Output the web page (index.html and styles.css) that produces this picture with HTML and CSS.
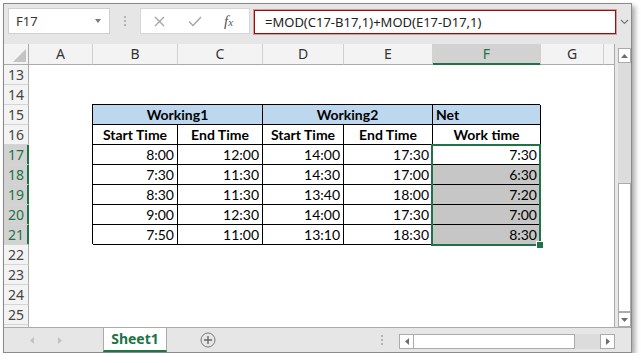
FILE: index.html
```html
<!DOCTYPE html>
<html lang="en">
<head>
    <meta charset="UTF-8">
    <meta name="viewport" content="width=device-width, initial-scale=1.0">
    <title>Sheet1 - Work time</title>
    <link rel="stylesheet" href="styles.css">
</head>
<body>

    <div class="window">

        <!-- Name box, edit buttons and formula input -->
        <div class="formula-bar">
            <div class="name-box">
                <span>F17</span>
                <span class="caret"></span>
            </div>
            <div class="grip">
                <svg width="3" height="11" viewBox="0 0 3 11"><rect x="0" y="0" width="2" height="2" fill="#b4b4b4"/><rect x="0" y="4" width="2" height="2" fill="#b4b4b4"/><rect x="0" y="8" width="2" height="2" fill="#b4b4b4"/></svg>
            </div>
            <div class="fx-box">
                <svg class="cancel" width="11" height="11" viewBox="0 0 11 11"><path d="M1 1 L10 10 M10 1 L1 10" stroke="#a6a6a6" stroke-width="1.4" fill="none"/></svg>
                <svg class="enter" width="14" height="11" viewBox="0 0 14 11"><path d="M1 5.5 L5 9.5 L13 1" stroke="#a6a6a6" stroke-width="1.4" fill="none"/></svg>
                <span class="fx"><i>f</i><i class="x">x</i></span>
            </div>
            <div class="formula">=MOD(C17-B17,1)+MOD(E17-D17,1)</div>
            <div class="expand">
                <svg width="9" height="6" viewBox="0 0 9 6"><path d="M1 1 L4.5 4.5 L8 1" stroke="#7a7a7a" stroke-width="1.2" fill="none"/></svg>
            </div>
        </div>

        <div class="main">
            <div class="sheet">
                <div class="col-heads">
                    <div class="corner">
                        <svg width="24" height="20" viewBox="0 0 24 20"><polygon points="9,18 22,18 22,5" fill="#c4c4c4"/></svg>
                    </div>
                    <div class="ch">A</div>
                    <div class="ch">B</div>
                    <div class="ch">C</div>
                    <div class="ch">D</div>
                    <div class="ch">E</div>
                    <div class="ch active">F</div>
                    <div class="ch">G</div>
                    <div class="ch fill"></div>
                </div>

                <div class="body">
                    <div class="row-heads">
                        <div class="rh">13</div>
                        <div class="rh">14</div>
                        <div class="rh">15</div>
                        <div class="rh">16</div>
                        <div class="rh active">17</div>
                        <div class="rh active">18</div>
                        <div class="rh active">19</div>
                        <div class="rh active">20</div>
                        <div class="rh active">21</div>
                        <div class="rh">22</div>
                        <div class="rh">23</div>
                        <div class="rh">24</div>
                        <div class="rh">25</div>
                        <div class="rh"></div>
                    </div>

                    <div class="cells">
                        <div class="tbl">
                            <div class="group span2">Working1</div>
                            <div class="group span2">Working2</div>
                            <div class="group net">Net</div>

                            <div class="head">Start Time</div>
                            <div class="head">End Time</div>
                            <div class="head">Start Time</div>
                            <div class="head">End Time</div>
                            <div class="head">Work time</div>

                            <div class="num">8:00</div>
                            <div class="num">12:00</div>
                            <div class="num">14:00</div>
                            <div class="num">17:30</div>
                            <div class="num">7:30</div>

                            <div class="num">7:30</div>
                            <div class="num">11:30</div>
                            <div class="num">14:30</div>
                            <div class="num">17:00</div>
                            <div class="num picked">6:30</div>

                            <div class="num">8:30</div>
                            <div class="num">11:30</div>
                            <div class="num">13:40</div>
                            <div class="num">18:00</div>
                            <div class="num picked">7:20</div>

                            <div class="num">9:00</div>
                            <div class="num">12:30</div>
                            <div class="num">14:00</div>
                            <div class="num">17:30</div>
                            <div class="num picked">7:00</div>

                            <div class="num">7:50</div>
                            <div class="num">11:00</div>
                            <div class="num">13:10</div>
                            <div class="num">18:30</div>
                            <div class="num picked">8:30</div>
                        </div>

                        <!-- selected range F17:F21 -->
                        <div class="selection"><span class="handle"></span></div>
                    </div>
                </div>
            </div>

            <div class="vscroll">
                <div class="sbtn">
                    <svg width="7" height="4" viewBox="0 0 7 4"><polygon points="0,4 7,4 3.5,0" fill="#6e6e6e"/></svg>
                </div>
                <div class="track"></div>
                <div class="thumb"></div>
                <div class="sbtn">
                    <svg width="7" height="4" viewBox="0 0 7 4"><polygon points="0,0 7,0 3.5,4" fill="#6e6e6e"/></svg>
                </div>
            </div>
        </div>

        <div class="tab-bar">
            <div class="tab-nav">
                <svg width="4" height="7" viewBox="0 0 4 7"><polygon points="4,0 4,7 0,3.5" fill="#c2c2c2"/></svg>
                <svg width="4" height="7" viewBox="0 0 4 7"><polygon points="0,0 0,7 4,3.5" fill="#c2c2c2"/></svg>
            </div>
            <div class="tab">Sheet1</div>
            <div class="add-sheet">
                <svg width="16" height="16" viewBox="0 0 16 16"><circle cx="8" cy="8" r="7" stroke="#7a7a7a" stroke-width="1" fill="none"/><path d="M8 4 V12 M4 8 H12" stroke="#6a6a6a" stroke-width="1.4"/></svg>
            </div>
            <div class="tab-grip">
                <svg width="3" height="11" viewBox="0 0 3 11"><rect x="0" y="0" width="2" height="2" fill="#b4b4b4"/><rect x="0" y="4" width="2" height="2" fill="#b4b4b4"/><rect x="0" y="8" width="2" height="2" fill="#b4b4b4"/></svg>
            </div>
            <div class="hscroll">
                <div class="hbtn">
                    <svg width="4" height="7" viewBox="0 0 4 7"><polygon points="4,0 4,7 0,3.5" fill="#6e6e6e"/></svg>
                </div>
                <div class="hthumb"></div>
                <div class="htrack"></div>
                <div class="hbtn">
                    <svg width="4" height="7" viewBox="0 0 4 7"><polygon points="0,0 0,7 4,3.5" fill="#6e6e6e"/></svg>
                </div>
            </div>
        </div>

    </div>

</body>
</html>
```

FILE: styles.css
```css
body {
    margin: 0;
    background-color: #fff;
    font-family: "Noto Sans", sans-serif;
}
.window {
    margin: 3px 0 0 3px;
    width: 629px;
    height: 350px;
    box-sizing: border-box;
    border: 1px solid #8a8a8a;
    background-color: #e6e6e6;
    box-shadow: 3px 3px 5px rgba(0, 0, 0, 0.35);
    display: flex;
    flex-direction: column;
}

/* formula bar */
.formula-bar {
    height: 40px;
    flex: none;
    box-sizing: border-box;
    padding: 4px 0 0 4px;
    display: flex;
    align-items: flex-start;
}
.name-box {
    width: 102px;
    height: 26px;
    box-sizing: border-box;
    border: 1px solid #cfcfcf;
    background-color: #fff;
    display: flex;
    align-items: center;
    padding: 0 8px 0 7px;
    font-size: 13px;
    color: #333;
}
.caret {
    margin-left: auto;
    border-top: 4px solid #7a7a7a;
    border-left: 3px solid transparent;
    border-right: 3px solid transparent;
}
.grip {
    width: 30px;
    height: 26px;
    display: flex;
    align-items: center;
    justify-content: center;
}
.fx-box {
    width: 110px;
    height: 26px;
    box-sizing: border-box;
    border: 1px solid #d6d6d6;
    background-color: #fff;
    display: flex;
    align-items: center;
    padding-left: 13px;
}
.fx-box .enter {
    margin-left: 23px;
}
.fx {
    margin-left: 22px;
    font-family: "Liberation Serif", serif;
    font-size: 15px;
    color: #555;
}
.fx .x {
    font-size: 11px;
}
.formula {
    margin: 2px 0 0 4px;
    width: 362px;
    height: 24px;
    box-sizing: border-box;
    border: 1px solid #a00d0d;
    box-shadow: 0 0 0 1px rgba(160, 13, 13, 0.35);
    background-color: #fff;
    padding-left: 10px;
    font-size: 13px;
    line-height: 22px;
    color: #222;
    white-space: nowrap;
}
.expand {
    width: 12px;
    height: 24px;
    margin: 2px 0 0 2px;
    display: flex;
    align-items: center;
    justify-content: center;
}

/* sheet grid */
.main {
    flex: 1;
    display: flex;
    min-height: 0;
}
.sheet {
    width: 611px;
    display: flex;
    flex-direction: column;
}
.col-heads {
    height: 21px;
    flex: none;
    display: grid;
    grid-template-columns: 25px 64px 85px 85px 81px 89px 108px 63px 1fr;
}
.corner,
.ch {
    box-sizing: border-box;
    background-color: #f3f3f3;
    border-right: 1px solid #d0d0d0;
    border-bottom: 1px solid #ababab;
}
.corner {
    border-right-color: #ababab;
}
.corner svg {
    display: block;
}
.ch {
    text-align: center;
    font-size: 14px;
    line-height: 20px;
    color: #333;
}
.ch.fill {
    border-right: 1px solid #ababab;
}
.ch.active {
    background-color: #d2d2d2;
    color: #217346;
    border-bottom-color: #217346;
    box-shadow: inset 0 -1px 0 #217346;
}
.body {
    flex: 1;
    display: flex;
    min-height: 0;
    overflow: hidden;
}
.row-heads {
    width: 25px;
    flex: none;
    background-color: #f3f3f3;
}
.rh {
    height: 20px;
    box-sizing: border-box;
    border-right: 1px solid #ababab;
    border-bottom: 1px solid #d4d4d4;
    text-align: center;
    font-size: 14px;
    line-height: 19px;
    color: #444;
}
.rh.active {
    background-color: #d2d2d2;
    color: #217346;
    border-right-color: #217346;
    box-shadow: inset -1px 0 0 #217346;
}
.cells {
    flex: 1;
    position: relative;
    background-color: #fff;
    border-right: 1px solid #ababab;
}

/* the time table */
.tbl {
    margin: 40px 0 0 64px;
    width: 448px;
    display: grid;
    grid-template-columns: 85px 85px 81px 89px 108px;
    grid-auto-rows: 20px;
    box-shadow: -1px -1px 0 #000;
    font-family: Lato, sans-serif;
    font-size: 14px;
    color: #000;
}
.tbl > div {
    box-sizing: border-box;
    border-right: 1px solid #000;
    border-bottom: 1px solid #000;
    padding: 0 3px;
    line-height: 19px;
    white-space: nowrap;
}
.group {
    background-color: #bdd7ee;
    font-weight: bold;
    text-align: center;
}
.span2 {
    grid-column: span 2;
}
.group.net {
    text-align: left;
}
.head {
    font-weight: bold;
    text-align: center;
}
.num {
    text-align: right;
}
.num.picked {
    background-color: #c6c6c6;
}
.selection {
    position: absolute;
    left: 402px;
    top: 79px;
    width: 110px;
    height: 102px;
    box-sizing: border-box;
    border: 2px solid #217346;
}
.handle {
    position: absolute;
    right: -5px;
    bottom: -5px;
    width: 6px;
    height: 6px;
    background-color: #217346;
    border: 1px solid #fff;
}

/* vertical scrollbar */
.vscroll {
    width: 16px;
    display: flex;
    flex-direction: column;
    padding: 4px 0 0 3px;
    box-sizing: border-box;
}
.sbtn {
    height: 15px;
    flex: none;
    box-sizing: border-box;
    border: 1px solid #ababab;
    background-color: #fff;
    display: flex;
    align-items: center;
    justify-content: center;
}
.track {
    height: 120px;
    background-color: #dcdcdc;
}
.thumb {
    flex: 1;
    box-sizing: border-box;
    border: 1px solid #ababab;
    background-color: #fff;
}

/* sheet tabs and horizontal scrollbar */
.tab-bar {
    height: 25px;
    flex: none;
    box-sizing: border-box;
    border-top: 1px solid #ababab;
    display: flex;
    padding-right: 16px;
}
.tab-nav {
    width: 99px;
    display: flex;
    align-items: center;
    gap: 24px;
    padding-left: 26px;
    box-sizing: border-box;
}
.tab {
    width: 64px;
    box-sizing: border-box;
    background-color: #fff;
    border-left: 1px solid #ababab;
    border-right: 1px solid #ababab;
    border-bottom: 2px solid #217346;
    text-align: center;
    font-size: 14px;
    font-weight: bold;
    line-height: 22px;
    color: #217346;
}
.add-sheet {
    margin-left: 33px;
    display: flex;
    align-items: center;
}
.tab-grip {
    margin-left: auto;
    margin-right: 15px;
    display: flex;
    align-items: center;
}
.hscroll {
    margin-top: 6px;
    height: 15px;
    display: flex;
}
.hbtn {
    width: 15px;
    box-sizing: border-box;
    border: 1px solid #ababab;
    background-color: #fff;
    display: flex;
    align-items: center;
    justify-content: center;
}
.hthumb {
    width: 161px;
    box-sizing: border-box;
    border: 1px solid #ababab;
    border-left: none;
    background-color: #fff;
}
.htrack {
    width: 25px;
    background-color: #dcdcdc;
}
```
